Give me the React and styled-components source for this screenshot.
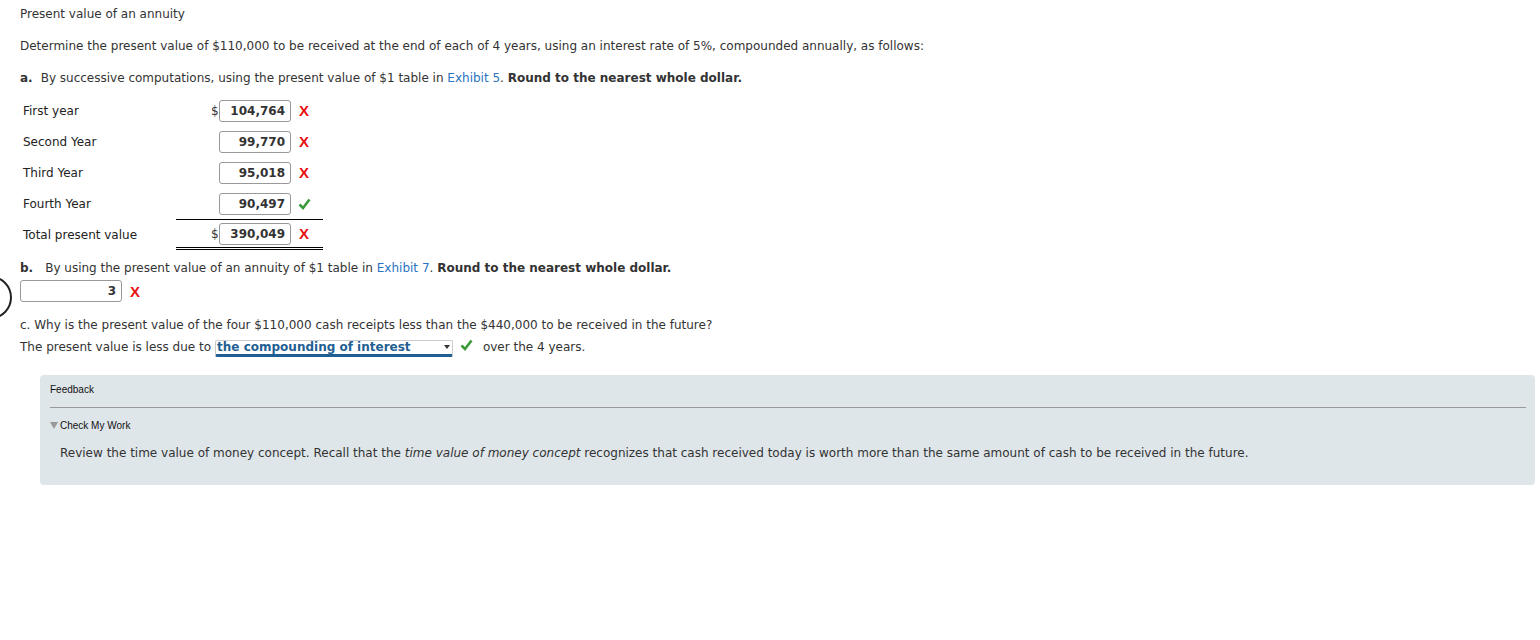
import React from 'react'
import styled, { createGlobalStyle } from 'styled-components'

const GlobalStyle = createGlobalStyle`
  html, body {
    margin: 0;
    padding: 0;
    background: #fff;
  }
  body {
    font-family: "DejaVu Sans", Verdana, sans-serif;
    font-size: 12px;
    color: #333;
  }
`

const Page = styled.div`
  position: relative;
  width: 1540px;
  height: 640px;
  overflow: hidden;
  padding: 5px 0 0 20px;
  box-sizing: border-box;
`

const Para = styled.p`
  margin: 0 0 ${({ gap }) => gap ?? 14}px;
  line-height: 18px;
  white-space: nowrap;
`

const Letter = styled.b`
  margin-right: ${({ wide }) => (wide ? 12 : 8)}px;
`

const Link = styled.span`
  color: #2a73c0;
`

const Grid = styled.div`
  display: grid;
  grid-template-columns: 156px 144px;
  grid-auto-rows: 31px;
  margin: -1px 0 0 3px;
  width: 300px;
`

const Label = styled.div`
  display: flex;
  align-items: center;
  color: #222;
`

const Amount = styled.div`
  display: flex;
  align-items: center;
  justify-content: flex-end;
  padding-right: 6px;
  border-top: ${({ top }) => (top ? '1px solid #000' : 'none')};
  border-bottom: ${({ double }) => (double ? '3px double #000' : 'none')};
  margin-left: -3px;
`

const Dollar = styled.span`
  width: 8px;
  color: #333;
`

const Box = styled.span`
  display: inline-flex;
  align-items: center;
  justify-content: flex-end;
  box-sizing: border-box;
  width: ${({ w }) => w ?? 72}px;
  height: 22px;
  padding-right: 5px;
  border: 1px solid #999;
  border-radius: 3px;
  font-weight: bold;
  color: #333;
  background: #fff;
`

const Mark = styled.span`
  display: inline-flex;
  align-items: center;
  justify-content: center;
  width: 26px;
`

const Cross = styled.span`
  font-family: "Liberation Sans", Arial, sans-serif;
  font-weight: bold;
  font-size: 15px;
  color: #e81010;
  line-height: 1;
`

const InputRow = styled.div`
  display: flex;
  align-items: center;
  margin: 3px 0 14px;
`

const Select = styled.span`
  display: inline-flex;
  align-items: center;
  justify-content: space-between;
  box-sizing: border-box;
  width: 238px;
  height: 17px;
  margin-left: 4px;
  padding: 0 2px 0 1px;
  border: 1px solid #ccc;
  border-bottom: 3px solid #1f5f93;
  border-radius: 2px;
  font-size: 12px;
  font-weight: bold;
  color: #1f5f93;
  background: #fff;
`

const Caret = styled.span`
  width: 0;
  height: 0;
  border-left: 3px solid transparent;
  border-right: 3px solid transparent;
  border-top: 4px solid #333;
`

const Panel = styled.section`
  margin: 18px 5px 0 20px;
  padding: 9px 9px 24px 10px;
  background: #dfe6ea;
  border-radius: 4px;
`

const SmallHead = styled.div`
  font-family: "Liberation Sans", Arial, sans-serif;
  font-size: 10px;
  color: #111;
  line-height: 12px;
`

const Rule = styled.hr`
  margin: 11px 0 12px;
  border: 0;
  border-top: 1px solid #999;
`

const Toggle = styled(SmallHead)`
  display: flex;
  align-items: center;
  gap: 2px;
`

const Tri = styled.span`
  width: 0;
  height: 0;
  border-left: 4px solid transparent;
  border-right: 4px solid transparent;
  border-top: 7px solid #999;
`

const Review = styled.p`
  margin: 13px 0 0 10px;
  line-height: 16px;
`

const Ring = styled.div`
  position: absolute;
  left: -30px;
  top: 276px;
  width: 38px;
  height: 39px;
  border: 2.5px solid #222;
  border-radius: 50%;
`

const Check = () => (
  <svg width="13" height="12" viewBox="0 0 13 12">
    <path d="M1.5 6.5 L5 10 L11.5 1.5" fill="none" stroke="#3b9b3b" strokeWidth="2.6" />
  </svg>
)

const rows = [
  { label: 'First year', value: '104,764', dollar: true, ok: false },
  { label: 'Second Year', value: '99,770', ok: false },
  { label: 'Third Year', value: '95,018', ok: false },
  { label: 'Fourth Year', value: '90,497', ok: true },
]

export default function App() {
  return (
    <Page>
      <GlobalStyle />
      <Ring />
      <Para gap={14}>Present value of an annuity</Para>
      <Para gap={14}>
        Determine the present value of $110,000 to be received at the end of each of 4 years, using an interest rate
        of 5%, compounded annually, as follows:
      </Para>
      <Para gap={9}>
        <Letter>a.</Letter>By successive computations, using the present value of $1 table in <Link>Exhibit 5</Link>.{' '}
        <b>Round to the nearest whole dollar.</b>
      </Para>

      <Grid>
        {rows.map((r) => (
          <React.Fragment key={r.label}>
            <Label>{r.label}</Label>
            <Amount>
              <Dollar>{r.dollar ? '$' : ''}</Dollar>
              <Box>{r.value}</Box>
              <Mark>{r.ok ? <Check /> : <Cross>X</Cross>}</Mark>
            </Amount>
          </React.Fragment>
        ))}
        <Label>Total present value</Label>
        <Amount top double>
          <Dollar>$</Dollar>
          <Box>390,049</Box>
          <Mark>
            <Cross>X</Cross>
          </Mark>
        </Amount>
      </Grid>

      <Para gap={0} style={{ marginTop: 9 }}>
        <Letter wide>b.</Letter>By using the present value of an annuity of $1 table in <Link>Exhibit 7</Link>.{' '}
        <b>Round to the nearest whole dollar.</b>
      </Para>
      <InputRow>
        <Box w={102}>3</Box>
        <Mark>
          <Cross>X</Cross>
        </Mark>
      </InputRow>

      <Para gap={4}>
        c. Why is the present value of the four $110,000 cash receipts less than the $440,000 to be received in the
        future?
      </Para>
      <Para gap={0}>
        The present value is less due to
        <Select>
          the compounding of interest
          <Caret />
        </Select>
        <Mark>
          <Check />
        </Mark>
        {' '}over the 4 years.
      </Para>

      <Panel>
        <SmallHead>Feedback</SmallHead>
        <Rule />
        <Toggle>
          <Tri />
          Check My Work
        </Toggle>
        <Review>
          Review the time value of money concept. Recall that the <i>time value of money concept</i> recognizes that
          cash received today is worth more than the same amount of cash to be received in the future.
        </Review>
      </Panel>
    </Page>
  )
}
